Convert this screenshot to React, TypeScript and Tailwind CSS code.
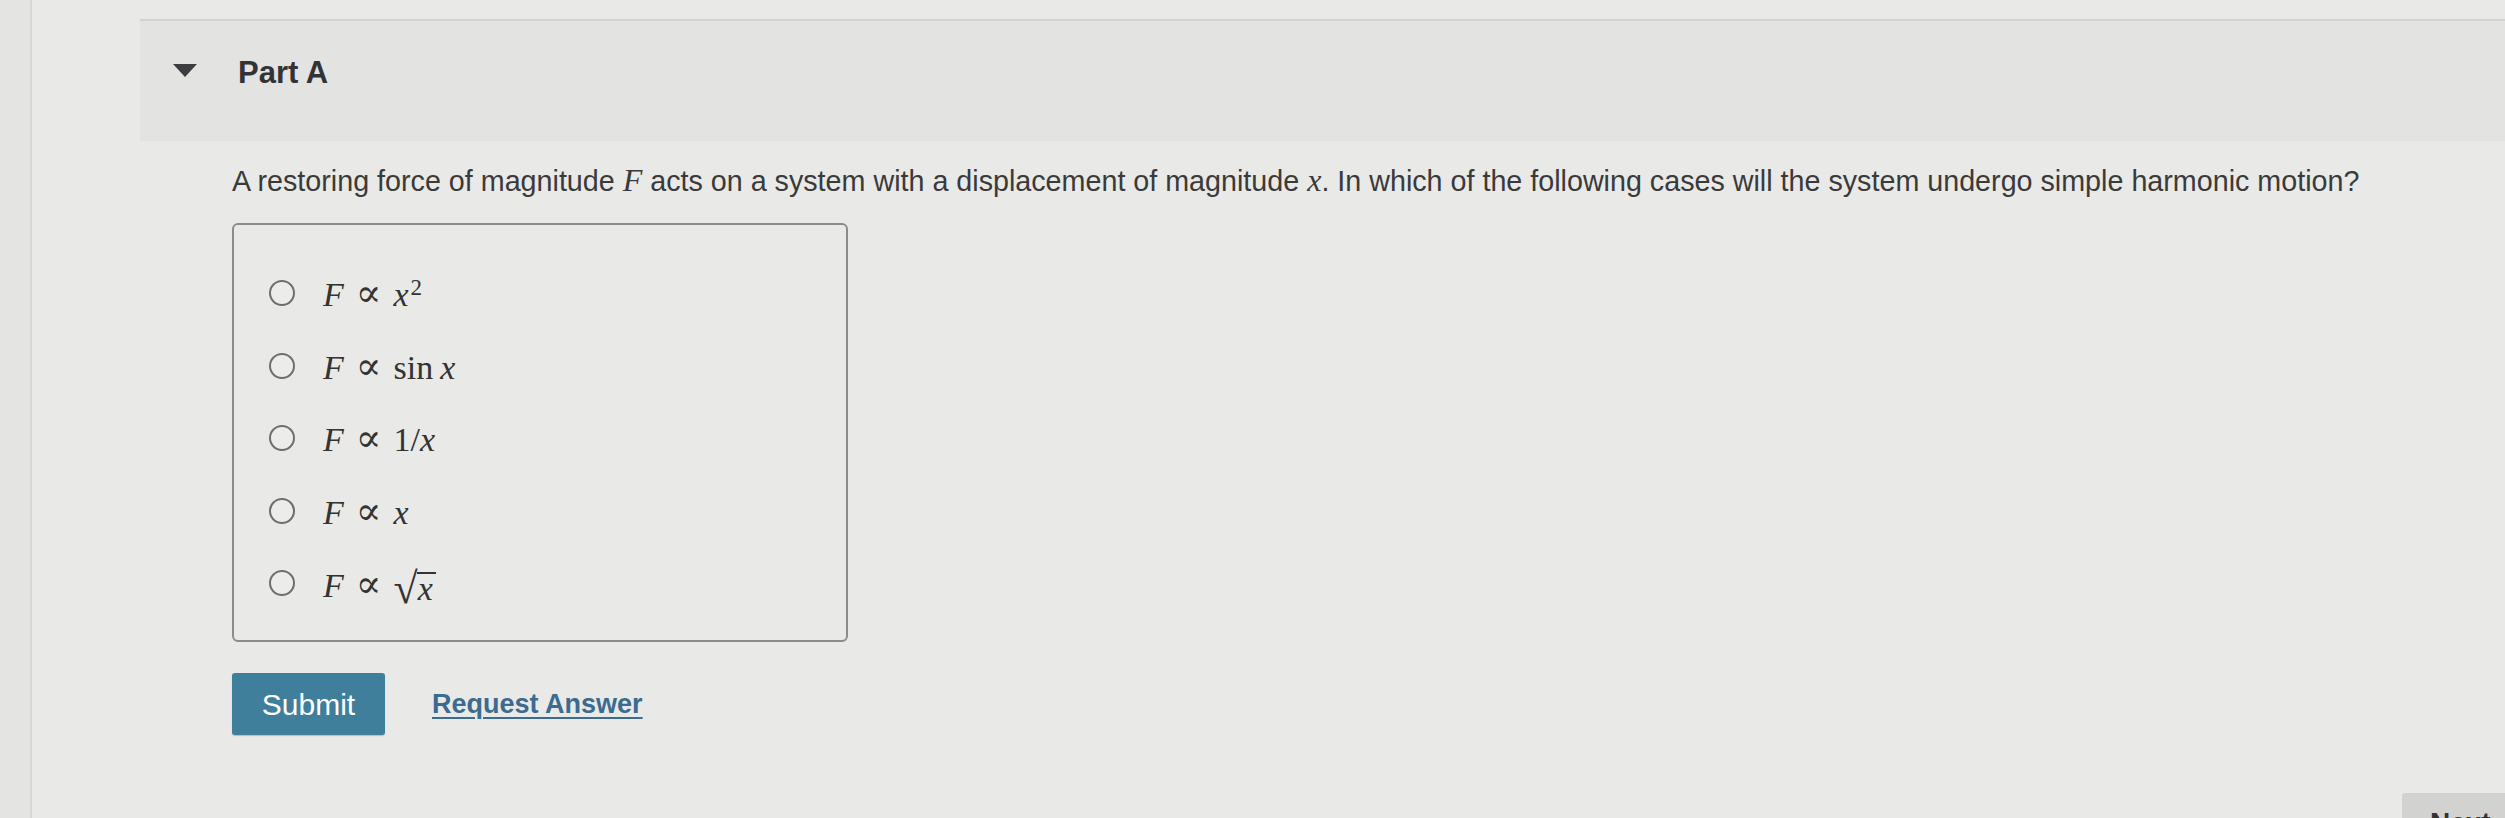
const sans = { fontFamily: '"Liberation Sans", Arial, sans-serif' };
const serif = { fontFamily: '"Liberation Serif", "DejaVu Serif", serif' };

const Var = ({ children }: { children: React.ReactNode }) => (
	<span className="italic" style={serif}>
		{children}
	</span>
);

const Rel = () => <span className="mx-[12px] not-italic text-[38px]">∝</span>;

const options: React.ReactNode[] = [
	<>
		<Var>F</Var>
		<Rel />
		<Var>x</Var>
		<sup className="text-[23px] ml-[2px]">2</sup>
	</>,
	<>
		<Var>F</Var>
		<Rel />
		<span>sin</span>
		<span className="ml-[7px]">
			<Var>x</Var>
		</span>
	</>,
	<>
		<Var>F</Var>
		<Rel />
		<span>1/</span>
		<Var>x</Var>
	</>,
	<>
		<Var>F</Var>
		<Rel />
		<Var>x</Var>
	</>,
	<>
		<Var>F</Var>
		<Rel />
		<span className="inline-flex items-start relative top-[6px]">
			<span className="text-[44px] leading-[44px] -mr-[1px]">√</span>
			<span className="border-t-2 border-[#333] mt-[5px] leading-[30px] pr-[3px] pl-[1px]">
				<Var>x</Var>
			</span>
		</span>
	</>,
];

const Radio = () => (
	<span className="w-[26px] h-[26px] rounded-full border-[2.5px] border-[#6e6e6e] bg-[#ececea] shrink-0" />
);

export default function App() {
	return (
		<div className="w-[2505px] h-[818px] overflow-hidden bg-[#e9e9e7] flex text-[#3a3a3a]" style={sans}>
			<div className="w-[32px] shrink-0 bg-[#e4e4e2] border-r-2 border-[#d6d6d4]" />
			<div className="flex-1 pl-[108px] flex flex-col relative">
				<div className="mt-[19px] border-t-2 border-[#d2d2d0]">
					<div className="h-[120px] bg-[#e3e3e1] flex items-start pt-[36px] pl-[33px]">
						<svg width="24" height="14" viewBox="0 0 24 14" className="mt-[7px]">
							<polygon points="0,0 24,0 12,13" fill="#3d3d40" />
						</svg>
						<span className="ml-[41px] text-[31px] font-bold leading-[32px] text-[#333337]">Part A</span>
					</div>
				</div>

				<div className="pl-[92px] pt-[22px]">
					<p className="text-[28.7px] leading-[34px] whitespace-nowrap">
						A restoring force of magnitude <span className="text-[32px]"><Var>F</Var></span> acts on a system with a
						displacement of magnitude <span className="text-[32px]"><Var>x</Var></span>. In which of the following cases will
						the system undergo simple harmonic motion?
					</p>

					<div className="mt-[25px] w-[616px] border-2 border-[#8c8c8c] rounded-[6px] pt-[55px] pb-[44px] pl-[35px] flex flex-col gap-[46.5px]">
						{options.map((o, i) => (
							<label key={i} className="flex items-center h-[26px]">
								<Radio />
								<span className="ml-[28px] text-[34px] leading-none whitespace-nowrap text-[#333]" style={serif}>
									{o}
								</span>
							</label>
						))}
					</div>

					<div className="mt-[31px] flex items-center">
						<button className="w-[153px] h-[62px] bg-[#3f7f9c] rounded-[3px] text-white text-[30px] shadow-[0_1px_1px_rgba(0,0,0,0.2)]">
							Submit
						</button>
						<a className="ml-[47px] text-[27px] font-bold text-[#3b6b8f] underline underline-offset-4 decoration-2">
							Request Answer
						</a>
					</div>
				</div>

				<div className="absolute left-[2370px] top-[793px] w-[120px] h-[40px] bg-[#d2d2d0] rounded-tl-[3px] pl-[28px] pt-[16px] text-[28px] font-bold leading-[28px] text-[#333]">
					Next
				</div>
			</div>
		</div>
	);
}
